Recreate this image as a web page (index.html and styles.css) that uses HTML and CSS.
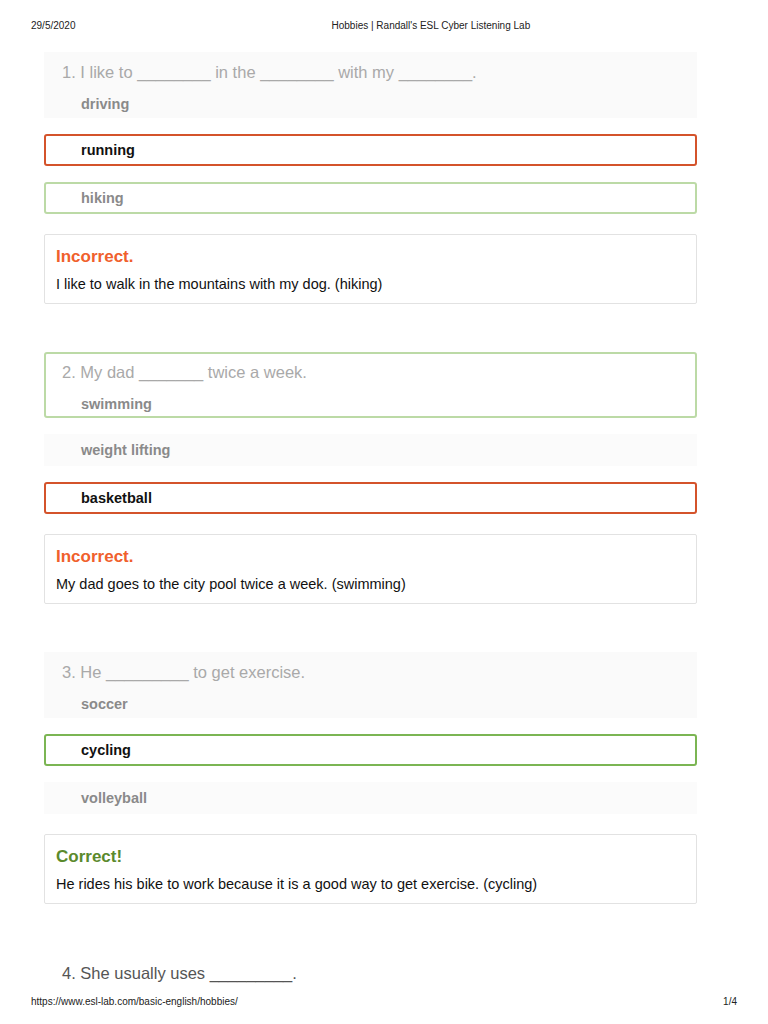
FILE: index.html
```html
<!DOCTYPE html>
<html lang="en">
<head>
    <meta charset="UTF-8">
    <meta name="viewport" content="width=device-width, initial-scale=1.0">
    <title>Hobbies | Randall's ESL Cyber Listening Lab</title>
    <link rel="stylesheet" href="styles.css">
</head>
<body>
    <div class="page">
        <div class="print-header">
            <span class="date">29/5/2020</span>
            <span class="doc-title">Hobbies | Randall's ESL Cyber Listening Lab</span>
        </div>

        <div class="quiz">
            <div class="question">
                <div class="stem">
                    <p class="prompt">1. I like to ________ in the ________ with my ________.</p>
                    <div class="answer">driving</div>
                </div>
                <div class="answer picked wrong">running</div>
                <div class="answer right-hint">hiking</div>
                <div class="feedback">
                    <h3 class="verdict bad">Incorrect.</h3>
                    <p>I like to walk in the mountains with my dog. (hiking)</p>
                </div>
            </div>

            <div class="question">
                <div class="stem hinted">
                    <p class="prompt">2. My dad _______ twice a week.</p>
                    <div class="answer">swimming</div>
                </div>
                <div class="answer shaded">weight lifting</div>
                <div class="answer picked wrong">basketball</div>
                <div class="feedback">
                    <h3 class="verdict bad">Incorrect.</h3>
                    <p>My dad goes to the city pool twice a week. (swimming)</p>
                </div>
            </div>

            <div class="question">
                <div class="stem">
                    <p class="prompt">3. He _________ to get exercise.</p>
                    <div class="answer">soccer</div>
                </div>
                <div class="answer picked right">cycling</div>
                <div class="answer shaded">volleyball</div>
                <div class="feedback">
                    <h3 class="verdict good">Correct!</h3>
                    <p>He rides his bike to work because it is a good way to get exercise. (cycling)</p>
                </div>
            </div>

            <div class="question last">
                <p class="prompt">4. She usually uses _________.</p>
            </div>
        </div>

        <div class="print-footer">
            <span>https://www.esl-lab.com/basic-english/hobbies/</span>
            <span>1/4</span>
        </div>
    </div>
</body>
</html>
```

FILE: styles.css
```css
body {
    margin: 0;
    padding: 0;
    background-color: #fff;
    font-family: "Liberation Sans", Arial, sans-serif;
    color: #111;
}
.page {
    height: 1024px;
    display: flex;
    flex-direction: column;
    overflow: hidden;
}
.print-header,
.print-footer {
    display: flex;
    font-size: 10px;
    color: #222;
    padding: 0 31px;
}
.print-header {
    padding-top: 20px;
    height: 52px;
    box-sizing: border-box;
}
.doc-title {
    margin-left: 256px;
}
.print-footer {
    justify-content: space-between;
    margin-top: auto;
    padding-bottom: 17px;
}
.quiz {
    padding: 0 71px 0 44px;
}
.question {
    display: flex;
    flex-direction: column;
    gap: 16px;
    margin-bottom: 48px;
}
.stem {
    background-color: #fafafa;
    height: 66px;
    box-sizing: border-box;
    padding-top: 10px;
}
.stem.hinted {
    background-color: #fff;
    border: 2px solid #bcdaa6;
    border-radius: 3px;
    padding-top: 8px;
}
.stem.hinted .prompt {
    padding-left: 16px;
}
.stem.hinted .answer {
    padding-left: 35px;
}
.prompt {
    margin: 0;
    padding-left: 18px;
    font-size: 16.5px;
    line-height: 20px;
    color: #a9a9a9;
}
.answer {
    height: 32px;
    box-sizing: border-box;
    padding-left: 37px;
    display: flex;
    align-items: center;
    font-size: 14.5px;
    font-weight: bold;
    color: #8a8a8a;
}
.stem .answer {
    height: 26px;
    margin-top: 9px;
}
.answer.shaded {
    background-color: #fbfbfb;
}
.answer.picked,
.answer.right-hint {
    border: 2px solid;
    border-radius: 3px;
    padding-left: 35px;
}
.answer.picked {
    color: #111;
}
.answer.wrong {
    border-color: #d4532b;
}
.answer.right {
    border-color: #7bb553;
}
.answer.right-hint {
    border-color: #bcdaa6;
}
.feedback {
    margin-top: 4px;
    height: 70px;
    box-sizing: border-box;
    border: 1px solid #e2e2e2;
    border-radius: 2px;
    padding: 11px 11px 0;
}
.verdict {
    margin: 0;
    font-size: 17px;
    line-height: 22px;
}
.verdict.bad {
    color: #f0602c;
}
.verdict.good {
    color: #5b8a2c;
}
.feedback p {
    margin: 8px 0 0;
    font-size: 14.5px;
    line-height: 16px;
}
.question.last {
    padding-top: 11px;
    margin-bottom: 0;
}
.question.last .prompt {
    color: #555;
}
```
